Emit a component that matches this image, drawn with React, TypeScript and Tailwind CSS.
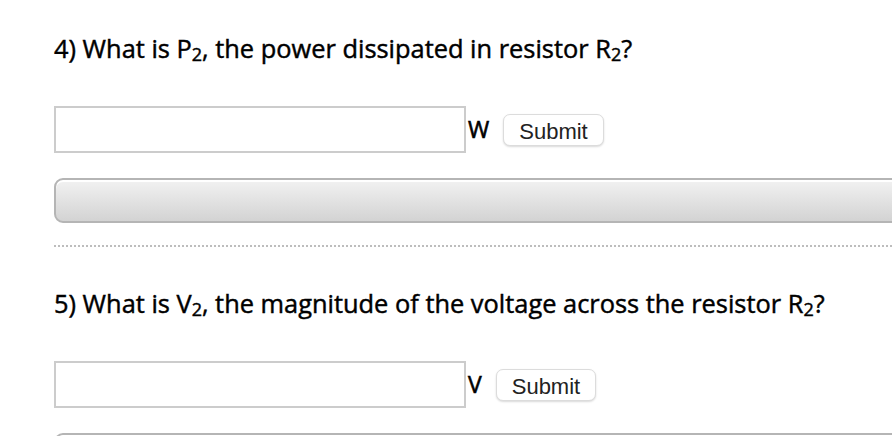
import React from "react";

const font = { fontFamily: '"Open Sans", "Noto Sans", sans-serif' };

function Sub() {
  return <sub className="text-[18px] relative top-[3px]">2</sub>;
}

function Question({ num, sym, text, unit }: { num: number; sym: string; text: React.ReactNode; unit: string }) {
  return (
    <div>
      <h2 className="text-[25.4px] font-normal leading-[30px] text-black [-webkit-text-stroke:0.45px_black]" style={font}>
        {num}) What is {sym}
        <Sub />, {text}
      </h2>
      <div className="mt-[43px] flex items-center">
        <input type="text" className="w-[412px] h-[47px] border-2 border-[#cccccc] bg-white outline-none" />
        <span className="ml-[2px] text-[23px] text-black [-webkit-text-stroke:0.6px_black]" style={font}>{unit}</span>
        <button
          className="ml-[14px] h-[32px] px-[15px] rounded-[7px] border border-[#dcdcdc] bg-white text-[22px] text-[#222] shadow-[0_1px_2px_rgba(0,0,0,0.15)]"
          style={{ fontFamily: '"Liberation Sans", Arial, sans-serif' }}
        >
          Submit
        </button>
      </div>
    </div>
  );
}

export default function App() {
  return (
    <div className="w-[892px] h-[436px] overflow-hidden bg-white">
      <div className="pl-[54px] pt-[33px] w-[960px]">
        <Question
          num={4}
          sym="P"
          text={<>the power dissipated in resistor R<Sub />?</>}
          unit="W"
        />
        <div className="mt-[25px] h-[45px] rounded-l-[9px] border-2 border-[#b5b5b5] bg-gradient-to-b from-[#f2f2f2] to-[#d3d3d3] shadow-[inset_0_2px_0_#ffffff]" />
        <div className="mt-[22px] border-t-2 border-dotted border-[#bdbdbd]" />
        <div className="mt-[41px]">
          <Question
            num={5}
            sym="V"
            text={<>the magnitude of the voltage across the resistor R<Sub />?</>}
            unit="V"
          />
        </div>
        <div className="mt-[25px] h-[45px] rounded-l-[9px] border-2 border-[#b5b5b5] bg-gradient-to-b from-[#f2f2f2] to-[#d3d3d3] shadow-[inset_0_2px_0_#ffffff]" />
      </div>
    </div>
  );
}
